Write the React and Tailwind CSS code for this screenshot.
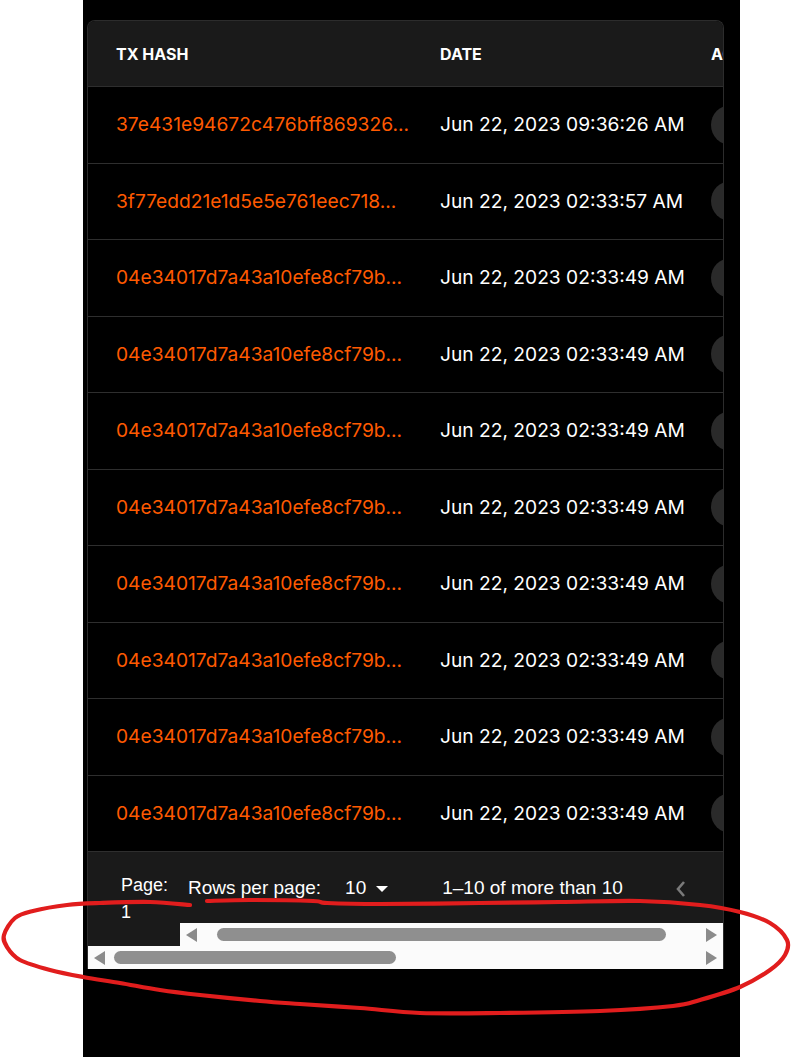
import React from 'react';

const rows = [
  { hash: '37e431e94672c476bff869326...', date: 'Jun 22, 2023 09:36:26 AM' },
  { hash: '3f77edd21e1d5e5e761eec718...', date: 'Jun 22, 2023 02:33:57 AM' },
  ...Array.from({ length: 8 }, () => ({
    hash: '04e34017d7a43a10efe8cf79b...',
    date: 'Jun 22, 2023 02:33:49 AM',
  })),
];

// hand-drawn annotation loop, traced from the screenshot
const loop = [
  [207, 901], [250, 900], [313, 901], [327, 903], [380, 904], [480, 903], [560, 902],
  [640, 901], [700, 905], [740, 912], [770, 923], [787, 940], [785, 955], [770, 970],
  [740, 987], [700, 1000], [673, 1006], [600, 1011], [500, 1013], [420, 1013],
  [360, 1008], [300, 1004], [260, 1001], [200, 995], [160, 990], [120, 983], [83, 977],
  [50, 970], [20, 960], [7, 947], [4, 935], [15, 918], [33, 911], [67, 905], [100, 903],
  [150, 902], [190, 905],
];

function smoothPath(pts) {
  let d = `M${pts[0][0]} ${pts[0][1]}`;
  for (let i = 0; i < pts.length - 1; i++) {
    const p0 = pts[i - 1] || pts[i];
    const p1 = pts[i];
    const p2 = pts[i + 1];
    const p3 = pts[i + 2] || p2;
    const c1x = p1[0] + (p2[0] - p0[0]) / 6;
    const c1y = p1[1] + (p2[1] - p0[1]) / 6;
    const c2x = p2[0] - (p3[0] - p1[0]) / 6;
    const c2y = p2[1] - (p3[1] - p1[1]) / 6;
    d += ` C${c1x} ${c1y} ${c2x} ${c2y} ${p2[0]} ${p2[1]}`;
  }
  return d;
}

function Arrow({ dir = 'left' }) {
  return (
    <svg width="11" height="14" viewBox="0 0 11 14" className="flex-shrink-0">
      {dir === 'left' ? (
        <polygon points="11,0 11,14 0,7" fill="#8b8b8b" />
      ) : (
        <polygon points="0,0 0,14 11,7" fill="#8b8b8b" />
      )}
    </svg>
  );
}

function Scrollbar({ arrowGap, thumbGap, thumbWidth }) {
  return (
    <div className="flex h-[23px] items-center bg-[#fbfbfb]">
      <div style={{ width: arrowGap }} />
      <Arrow dir="left" />
      <div style={{ width: thumbGap }} />
      <div className="h-[13px] rounded-full bg-[#8f8f8f]" style={{ width: thumbWidth }} />
      <div className="flex-1" />
      <Arrow dir="right" />
      <div className="w-[6px]" />
    </div>
  );
}

export default function App() {
  return (
    <div className="relative min-h-[1057px] w-full bg-white">
      <div className="ml-[83px] h-[1057px] w-[657px] bg-black pl-[4px] pt-[20px] font-['Inter',sans-serif]">
        <div className="w-[637px] overflow-hidden rounded-t-lg border-x border-t border-[#2c2c2c]">
          {/* table, clipped horizontally */}
          <div className="overflow-hidden">
            <div className="w-[900px]">
              <div className="flex h-[66px] items-center border-b border-[#2e2e2e] bg-[#1a1a1a] text-[16px] font-bold text-white">
                <div className="w-[324px] pl-[28px]">TX HASH</div>
                <div className="w-[299px] pl-[28px]">DATE</div>
                <div>ACTIONS</div>
              </div>
              {rows.map((r, i) => (
                <div
                  key={i}
                  className="flex h-[76.5px] items-center border-b border-[#2e2e2e] bg-black text-[19.2px]"
                >
                  <div className="w-[324px] whitespace-nowrap pl-[28px] text-[#ff5a00]">{r.hash}</div>
                  <div className="w-[299px] whitespace-nowrap pl-[28px] text-white">{r.date}</div>
                  <div className="h-10 w-10 rounded-full bg-[#2a2a2a]" />
                </div>
              ))}
            </div>
          </div>

          {/* footer */}
          <div className="flex bg-[#1a1a1a] font-['Liberation_Sans',Arial,sans-serif] text-white">
            <div className="w-[92px] flex-shrink-0 pl-[33px] pt-[20px] text-[18px] leading-[27px]">
              Page: 1
            </div>
            <div className="flex min-w-0 flex-1 flex-col">
              <div className="flex h-[71px] items-center overflow-hidden whitespace-nowrap pl-[8px] pt-[2px] text-[19px]">
                <span>Rows per page:</span>
                <span className="ml-[24px]">10</span>
                <svg width="12" height="6" viewBox="0 0 12 6" className="ml-[10px] flex-shrink-0">
                  <polygon points="0,0 12,0 6,6" fill="#fff" />
                </svg>
                <span className="ml-[54px]">1–10 of more than 10</span>
                <svg
                  width="10"
                  height="16"
                  viewBox="0 0 10 16"
                  className="ml-[53px] flex-shrink-0"
                  fill="none"
                  stroke="#7a7a7a"
                  strokeWidth="2.6"
                >
                  <polyline points="8,1 2,8 8,15" />
                </svg>
              </div>
              <Scrollbar arrowGap={6} thumbGap={20} thumbWidth={449} />
            </div>
          </div>
          <Scrollbar arrowGap={6} thumbGap={9} thumbWidth={282} />
        </div>
      </div>

      <svg
        className="pointer-events-none absolute left-0 top-0"
        width="791"
        height="1057"
        viewBox="0 0 791 1057"
      >
        <path
          d={smoothPath(loop)}
          fill="none"
          stroke="#e11d1d"
          strokeWidth="4.2"
          strokeLinecap="round"
          strokeLinejoin="round"
        />
      </svg>
    </div>
  );
}
